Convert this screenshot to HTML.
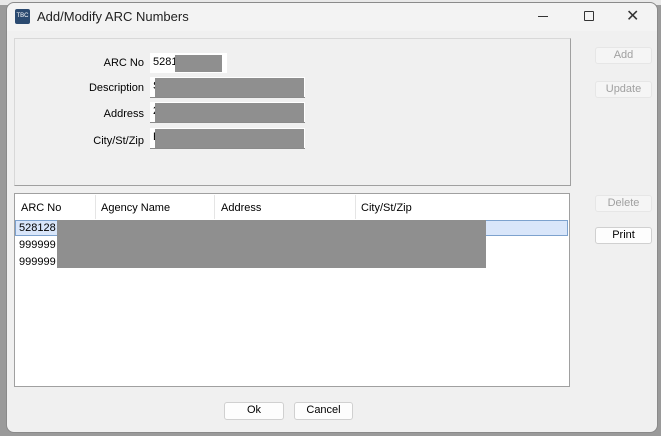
<!DOCTYPE html>
<html><head><style>
*{margin:0;padding:0;box-sizing:border-box}
body{width:661px;height:436px;background:#9a9a9a;position:relative;overflow:hidden;font-family:"Liberation Sans",sans-serif;font-size:11px;color:#000}
.a{position:absolute}
.win{left:6px;top:2px;width:652px;height:431px;background:#f0f0f0;border:1px solid #8a8a8a;border-radius:8px}
.btn{position:absolute;background:#fdfdfd;border:1px solid #d0d0d0;border-radius:3px;text-align:center;line-height:14px;font-size:11px}
.dis{background:#f5f5f5;color:#a0a0a0;border-color:#e6e6e6}
.lbl{position:absolute;width:80px;text-align:right;left:64px}
.in{position:absolute;background:#fff;border-bottom:1px solid #8a8a8a;padding-left:3px;line-height:18px}
.g{position:absolute;background:#8f8f8f}
</style></head><body>
<div class="a" style="left:0;top:0;width:661px;height:5px;background:#e8e8e8"></div>
<div class="a win"></div>
<div class="a" style="left:7px;top:3px;width:650px;height:28px;background:#f3f3f3;border-radius:8px 8px 0 0"></div>
<div class="a" style="left:15px;top:9px;width:15px;height:15px;background:#2b4a70;border-radius:2px;color:#fff;font-size:6px;line-height:15px;text-align:center">TBC</div>
<div class="a" style="left:37px;top:9px;font-size:13px;color:#222">Add/Modify ARC Numbers</div>
<div class="a" style="left:538px;top:16px;width:10px;height:1px;background:#333"></div>
<div class="a" style="left:584px;top:11px;width:10px;height:10px;border:1.5px solid #333;border-radius:1px"></div>
<div class="a" style="left:626px;top:6px;font-size:16px;color:#333">✕</div>
<div class="a" style="left:14px;top:38px;width:557px;height:148px;border:1px solid #d8d8d8;border-right-color:#a0a0a0;border-bottom-color:#a0a0a0"></div>
<div class="lbl" style="top:57px">ARC No</div>
<div class="lbl" style="top:82px">Description</div>
<div class="lbl" style="top:108px">Address</div>
<div class="lbl" style="top:135px">City/St/Zip</div>
<div class="in" style="left:150px;top:53px;width:77px;height:20px;border:none">5281</div><div class="g" style="left:175px;top:55px;width:47px;height:17px"></div>
<div class="in" style="left:150px;top:77px;width:155px;height:21px">S</div><div class="g" style="left:155px;top:78px;width:149px;height:19px"></div>
<div class="in" style="left:150px;top:102px;width:155px;height:21px">2</div><div class="g" style="left:155px;top:103px;width:149px;height:19px"></div>
<div class="in" style="left:150px;top:128px;width:155px;height:21px">E</div><div class="g" style="left:155px;top:129px;width:149px;height:19px"></div>
<div class="btn dis" style="left:595px;top:47px;width:57px;height:17px">Add</div>
<div class="btn dis" style="left:595px;top:81px;width:57px;height:17px">Update</div>
<div class="btn dis" style="left:595px;top:195px;width:57px;height:17px">Delete</div>
<div class="btn" style="left:595px;top:227px;width:57px;height:17px">Print</div>
<div class="a" style="left:14px;top:193px;width:556px;height:194px;background:#fff;border:1px solid #a0a0a0"></div>
<div class="a" style="left:21px;top:202px">ARC No</div>
<div class="a" style="left:101px;top:202px">Agency Name</div>
<div class="a" style="left:221px;top:202px">Address</div>
<div class="a" style="left:361px;top:202px">City/St/Zip</div>
<div class="a" style="left:95px;top:195px;width:1px;height:24px;background:#e5e5e5"></div>
<div class="a" style="left:214px;top:195px;width:1px;height:24px;background:#e5e5e5"></div>
<div class="a" style="left:355px;top:195px;width:1px;height:24px;background:#e5e5e5"></div>
<div class="a" style="left:15px;top:220px;width:553px;height:16px;background:#d9e6fa;border:1px solid #7da2ce"></div>
<div class="a" style="left:19px;top:222px">528128</div>
<div class="a" style="left:19px;top:239px">999999</div>
<div class="a" style="left:19px;top:256px">999999</div>
<div class="g" style="left:57px;top:220px;width:429px;height:48px"></div>
<div class="btn" style="left:224px;top:402px;width:60px;height:18px">Ok</div>
<div class="btn" style="left:294px;top:402px;width:59px;height:18px">Cancel</div>
</body></html>
